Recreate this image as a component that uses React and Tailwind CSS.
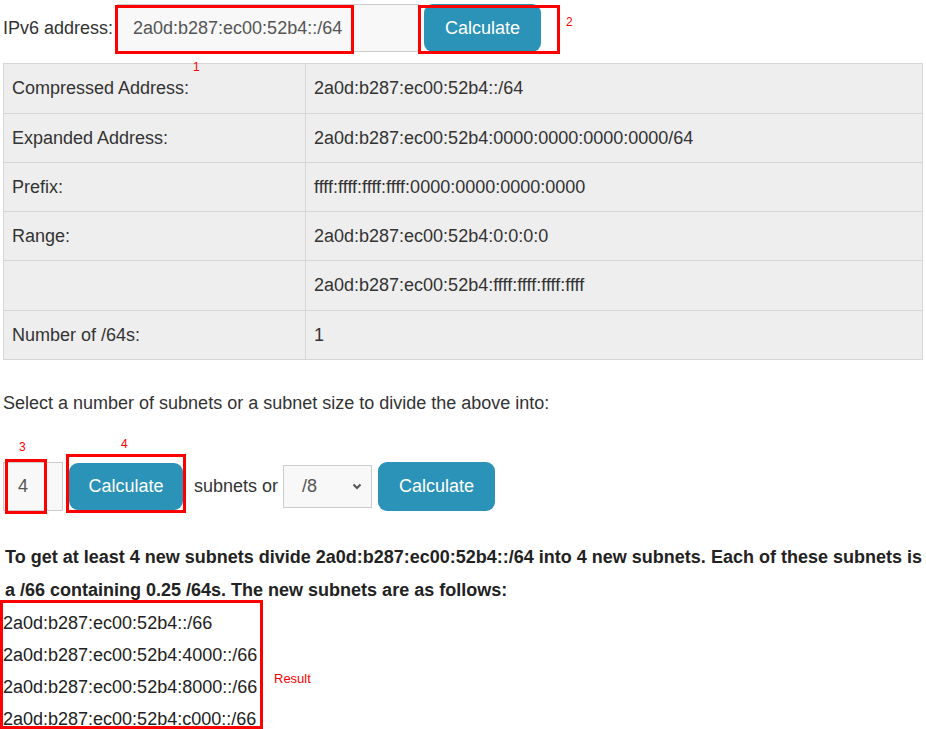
import React from "react";

const F = { fontFamily: '"Liberation Sans", Arial, sans-serif' };

function Row({ label, value, h }) {
  return (
    <div className={"flex border-t border-[#d6d6d6] " + h}>
      <div className="w-[302px] shrink-0 border-r border-[#d6d6d6] pl-[8px] flex items-center">{label}</div>
      <div className="flex-1 pl-[8px] flex items-center">{value}</div>
    </div>
  );
}

const Btn = ({ className = "" }) => (
  <button className={"bg-[#2b92b8] text-white text-[18px] rounded-[9px] flex items-center justify-center " + className}>
    Calculate
  </button>
);

export default function App() {
  return (
    <div className="relative w-[926px] h-[729px] bg-white text-[#333333] text-[18px] overflow-hidden" style={F}>
      {/* top row */}
      <div className="flex items-center h-[48px] mt-[4px] pl-[3px]">
        <span className="w-[114px]">IPv6 address:</span>
        <div className="w-[302px] h-[48px] border border-[#cccccc] bg-[#f8f8f8] flex items-center pl-[15px] text-[#555555]">
          2a0d:b287:ec00:52b4::/64
        </div>
        <Btn className="ml-[5px] w-[117px] h-[48px]" />
      </div>

      {/* table */}
      <div className="mt-[11px] ml-[3px] w-[920px] bg-[#eeeeee] border-l border-r border-b border-[#d6d6d6]">
        <Row h="h-[50px]" label="Compressed Address:" value="2a0d:b287:ec00:52b4::/64" />
        <Row h="h-[49px]" label="Expanded Address:" value="2a0d:b287:ec00:52b4:0000:0000:0000:0000/64" />
        <Row h="h-[49px]" label="Prefix:" value="ffff:ffff:ffff:ffff:0000:0000:0000:0000" />
        <Row h="h-[49px]" label="Range:" value="2a0d:b287:ec00:52b4:0:0:0:0" />
        <Row h="h-[50px]" label="" value="2a0d:b287:ec00:52b4:ffff:ffff:ffff:ffff" />
        <Row h="h-[49px]" label="Number of /64s:" value="1" />
      </div>

      <p className="mt-[32px] pl-[3px] leading-[22px]">
        Select a number of subnets or a subnet size to divide the above into:
      </p>

      {/* second row */}
      <div className="flex items-center h-[49px] mt-[48px] pl-[3px]">
        <div className="w-[60px] h-[49px] border border-[#cccccc] bg-[#f8f8f8] flex items-center pl-[14px] text-[#555555]">4</div>
        <Btn className="ml-[6px] w-[114px] h-[47px]" />
        <span className="ml-[11px]">subnets or</span>
        <div className="ml-[5px] w-[89px] h-[43px] border border-[#cccccc] bg-[#f8f8f8] flex items-center pl-[18px] pr-[8px] text-[#555555] justify-between">
          <span>/8</span>
          <svg width="10" height="7" viewBox="0 0 10 7" className="mr-[1px]">
            <path d="M1.5 1.5 L5 5 L8.5 1.5" fill="none" stroke="#555" strokeWidth="2" />
          </svg>
        </div>
        <Btn className="ml-[6px] w-[117px] h-[49px]" />
      </div>

      {/* result text */}
      <p className="mt-[30px] pl-[5px] font-bold text-[18px] leading-[33px] text-[#222222]">
        To get at least 4 new subnets divide 2a0d:b287:ec00:52b4::/64 into 4 new subnets. Each of these subnets is a /66 containing 0.25 /64s. The new subnets are as follows:
      </p>
      <div className="pl-[3px] leading-[32px] text-[#222222]">
        <div>2a0d:b287:ec00:52b4::/66</div>
        <div>2a0d:b287:ec00:52b4:4000::/66</div>
        <div>2a0d:b287:ec00:52b4:8000::/66</div>
        <div>2a0d:b287:ec00:52b4:c000::/66</div>
      </div>

      {/* annotations */}
      <div className="absolute left-[115px] top-[5px] w-[239px] h-[49px] border-[3px] border-[#ff0000]" />
      <span className="absolute left-[193px] top-[58px] text-[12px] text-[#ff0000]">1</span>
      <div className="absolute left-[418px] top-[5px] w-[142px] h-[49px] border-[3px] border-[#ff0000]" />
      <span className="absolute left-[566px] top-[13px] text-[12px] text-[#ff0000]">2</span>
      <div className="absolute left-[5px] top-[459px] w-[42px] h-[55px] border-[3px] border-[#ff0000]" />
      <span className="absolute left-[19px] top-[438px] text-[12px] text-[#ff0000]">3</span>
      <div className="absolute left-[66px] top-[454px] w-[120px] h-[59px] border-[3px] border-[#ff0000]" />
      <span className="absolute left-[121px] top-[435px] text-[12px] text-[#ff0000]">4</span>
      <div className="absolute left-[0px] top-[600px] w-[263px] h-[129px] border-[3px] border-[#ff0000]" />
      <span className="absolute left-[274px] top-[669px] text-[13px] text-[#ff0000]">Result</span>
    </div>
  );
}
